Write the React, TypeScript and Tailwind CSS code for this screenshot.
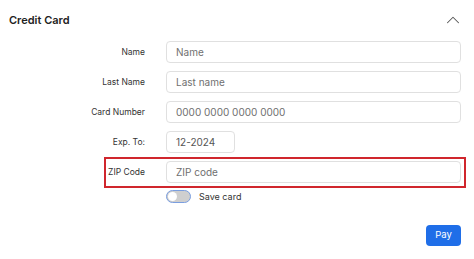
import { ChevronUp } from "lucide-react";

const rows = [
  { label: "Name", placeholder: "Name", width: "flex-1" },
  { label: "Last Name", placeholder: "Last name", width: "flex-1" },
  { label: "Card Number", placeholder: "0000 0000 0000 0000", width: "flex-1" },
];

function Field({ label, placeholder, value, width }: { label: string; placeholder?: string; value?: string; width: string }) {
  return (
    <div className="flex items-center">
      <label className="w-[146px] pr-[1px] text-right text-[8.5px] text-[#333]">{label}</label>
      <div className="ml-[20px] flex flex-1">
        <input
          className={`${width} h-[22px] rounded-[4px] border border-[#e0e0e0] bg-white px-[9px] text-[10px] text-[#555] placeholder:text-[#6f6f6f] outline-none`}
          placeholder={placeholder}
          defaultValue={value}
        />
      </div>
    </div>
  );
}

export default function App() {
  return (
    <div className="w-[474px] h-[259px] bg-white overflow-hidden" style={{ fontFamily: "Inter, 'Noto Sans', sans-serif" }}>
      {/* header */}
      <div className="flex items-center justify-between pl-[9px] pr-[10px] pt-[9px]">
        <div className="text-[11px] font-semibold text-[#222]">Credit Card</div>
        <ChevronUp className="size-[22px] text-[#555]" strokeWidth={1.1} />
      </div>

      {/* form */}
      <div className="mt-[10px] flex flex-col gap-[8px] pr-[13px]">
        {rows.map((r) => (
          <Field key={r.label} label={r.label} placeholder={r.placeholder} width={r.width} />
        ))}
        <Field label="Exp. To:" value="12-2024" width="w-[69px] flex-none" />
        <div className="relative">
          <Field label="ZIP Code" placeholder="ZIP code" width="flex-1" />
          <div className="pointer-events-none absolute left-[104px] right-[-5px] top-[-4px] bottom-[-5px] border-2 border-[#d0262d]" />
        </div>
      </div>

      {/* save card */}
      <div className="mt-[7px] ml-[166px] flex items-center gap-[8px]">
        <div className="relative h-[13px] w-[25px] rounded-full border border-[#7a9ee0] bg-[#cfcfcf]">
          <div className="absolute left-[1px] top-[1px] size-[9px] rounded-full bg-white" />
        </div>
        <span className="text-[9px] text-[#333]">Save card</span>
      </div>

      {/* pay */}
      <div className="mt-[21px] flex justify-end pr-[13px]">
        <button className="h-[21px] w-[35px] rounded-[4px] bg-[#1f6ee8] text-[9.5px] text-white">Pay</button>
      </div>
    </div>
  );
}
